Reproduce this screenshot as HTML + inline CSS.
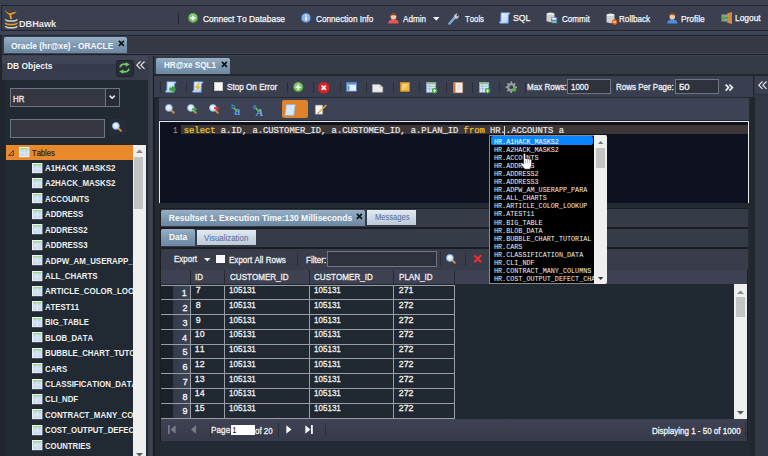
<!DOCTYPE html>
<html><head><meta charset="utf-8">
<style>
*{box-sizing:border-box;margin:0;padding:0}
html,body{width:768px;height:456px;overflow:hidden;background:#3b3f4e;font-family:"Liberation Sans",sans-serif;color:#fff;position:relative}
.a{position:absolute}
.t{position:absolute;white-space:nowrap;font-kerning:none;transform-origin:0 0}
svg{overflow:visible}
</style></head><body>
<div class="a" style="left:0px;top:0px;width:768px;height:31px;background:#3c4152"></div>
<div class="a" style="left:0px;top:31px;width:768px;height:4.5px;background:linear-gradient(#3f4758,#394152)"></div>
<div class="a" style="left:1px;top:5px;width:767px;height:26px;background:#3b3f50;border:1px solid #23252b;border-right:none"></div>
<div class="a" style="left:178px;top:13px;width:1px;height:11px;background:#23262e"></div>
<svg class="a" style="left:3.8px;top:8.6px" width="14" height="20" viewBox="0 0 14 20"><path d="M0.4 0.6 C1.5 1.6 3 3.6 5 4.2 C7 4.5 9 2.8 12.8 2.4 C11.6 3.9 9.6 5.1 7.3 5.7 C7.5 6.9 7.4 8 8.3 9.9 L6.1 9.9 C6.2 8.6 5.1 7.6 5.6 6.3 C3.4 5 1.4 3 0.4 0.6 Z" fill="#f29c12"/>
<path d="M1.5 10.3 C1.5 12.7 13 12.7 13 10.3" fill="none" stroke="#d4d4d4" stroke-width="1.5"/>
<path d="M1.5 13.7 C1.5 16.3 13 16.3 13 13.7" fill="none" stroke="#f29c12" stroke-width="1.6"/>
<path d="M1.5 17 C1.5 19.4 13 19.4 13 17" fill="none" stroke="#d4d4d4" stroke-width="1.5"/></svg>
<div class="t" style="left:18.75px;top:19.60px;font-size:8.8px;line-height:8.8px;font-weight:bold;color:#e4e4e4;font-family:'Liberation Sans',sans-serif;transform:scaleX(1.0417);">DBHawk</div>
<div class="t" style="left:202.60px;top:14.30px;font-size:9.5px;line-height:9.5px;font-weight:normal;color:#f8f8f8;font-family:'Liberation Sans',sans-serif;transform:scaleX(0.8880);-webkit-text-stroke-width:0.25px">Connect To Database</div>
<div class="t" style="left:315.50px;top:14.30px;font-size:9.5px;line-height:9.5px;font-weight:normal;color:#f8f8f8;font-family:'Liberation Sans',sans-serif;transform:scaleX(0.8621);-webkit-text-stroke-width:0.25px">Connection Info</div>
<div class="t" style="left:403.40px;top:14.30px;font-size:9.5px;line-height:9.5px;font-weight:normal;color:#f8f8f8;font-family:'Liberation Sans',sans-serif;transform:scaleX(0.8519);-webkit-text-stroke-width:0.25px">Admin</div>
<div class="t" style="left:464.60px;top:14.30px;font-size:9.5px;line-height:9.5px;font-weight:normal;color:#f8f8f8;font-family:'Liberation Sans',sans-serif;transform:scaleX(0.8174);-webkit-text-stroke-width:0.25px">Tools</div>
<div class="t" style="left:513.08px;top:13.30px;font-size:9.5px;line-height:9.5px;font-weight:normal;color:#f8f8f8;font-family:'Liberation Sans',sans-serif;transform:scaleX(0.9167);-webkit-text-stroke-width:0.25px">SQL</div>
<div class="t" style="left:561.50px;top:14.30px;font-size:9.5px;line-height:9.5px;font-weight:normal;color:#f8f8f8;font-family:'Liberation Sans',sans-serif;transform:scaleX(0.8455);-webkit-text-stroke-width:0.25px">Commit</div>
<div class="t" style="left:619.14px;top:14.30px;font-size:9.5px;line-height:9.5px;font-weight:normal;color:#f8f8f8;font-family:'Liberation Sans',sans-serif;transform:scaleX(0.8556);-webkit-text-stroke-width:0.25px">Rollback</div>
<div class="t" style="left:680.92px;top:14.30px;font-size:9.5px;line-height:9.5px;font-weight:normal;color:#f8f8f8;font-family:'Liberation Sans',sans-serif;transform:scaleX(0.8808);-webkit-text-stroke-width:0.25px">Profile</div>
<div class="t" style="left:735.12px;top:13.30px;font-size:9.5px;line-height:9.5px;font-weight:normal;color:#f8f8f8;font-family:'Liberation Sans',sans-serif;transform:scaleX(0.8821);-webkit-text-stroke-width:0.25px">Logout</div>
<svg class="a" style="left:187.6px;top:13.3px" width="10" height="10" viewBox="0 0 10 10"><circle cx="5" cy="5" r="4.9" fill="#5aa84a"/><circle cx="5" cy="4.6" r="4" fill="#7cc46a"/><path d="M5 2.4V7.6M2.4 5H7.6" stroke="#fff" stroke-width="1.5"/></svg>
<svg class="a" style="left:300.8px;top:13.3px" width="10" height="10" viewBox="0 0 10 10"><circle cx="5" cy="5" r="4.9" fill="#4f7fc0"/><circle cx="5" cy="4.7" r="4.1" fill="#8db4e6"/><rect x="4.3" y="4" width="1.5" height="3.8" fill="#fff"/><rect x="4.3" y="2.1" width="1.5" height="1.3" fill="#fff"/></svg>
<svg class="a" style="left:387.8px;top:12.8px" width="11" height="11" viewBox="0 0 11 11"><path d="M0.3 10.5 C0.3 7.3 2.5 6.3 5.5 6.3 C8.5 6.3 10.7 7.3 10.7 10.5Z" fill="#e8584e"/><circle cx="5.5" cy="3.6" r="2.9" fill="#f3c7a0"/><path d="M2.5 3.2 C2.6 0.8 4 0.3 5.5 0.3 C7 0.3 8.4 0.8 8.5 3.2 C7.5 2.2 6 2 5.5 2.3 C5 2 3.5 2.2 2.5 3.2Z" fill="#8a4a24"/></svg>
<svg class="a" style="left:432.9px;top:16.6px" width="7" height="4" viewBox="0 0 7 4"><path d="M0 0H6.5L3.25 3.8Z" fill="#f5f5f5"/></svg>
<svg class="a" style="left:448.2px;top:12.6px" width="12" height="12" viewBox="0 0 12 12"><path d="M1.5 10.5 L6.8 4.6" stroke="#7da7dc" stroke-width="2.6" stroke-linecap="round"/><path d="M6 3.6 C6 1.5 7.5 0.2 9.8 0.4 L8.4 2.2 L9.2 3.4 L10.8 2.2 C11.2 4.5 9.6 6.2 7.4 5.8Z" fill="#c8c8c8"/></svg>
<svg class="a" style="left:499.3px;top:12.2px" width="11.5" height="12" viewBox="0 0 11.5 12"><defs><linearGradient id="dg" x1="0" y1="0" x2="1" y2="1"><stop offset="0" stop-color="#f4f9ff"/><stop offset="1" stop-color="#a9cdf2"/></linearGradient></defs><path d="M2 0.7H10.2C11.2 0.7 11.2 2.4 10.2 2.4H9.6L9.2 11.3H1.2C0.2 11.3 0.2 9.6 1.2 9.6H1.8Z" fill="url(#dg)" stroke="#5b93d8" stroke-width="0.8"/></svg>
<svg class="a" style="left:545.9px;top:12.4px" width="12" height="12" viewBox="0 0 12 12"><ellipse cx="4.5" cy="2" rx="4" ry="1.6" fill="#e8e8e8"/><path d="M0.5 2 V9 C0.5 10.6 8.5 10.6 8.5 9 V2 C8.5 3.6 0.5 3.6 0.5 2Z" fill="#d0d0d0"/><rect x="5.2" y="5.4" width="6" height="5.8" fill="#4f86c8"/><rect x="6.2" y="5.8" width="4" height="2" fill="#e8f0f8"/><rect x="6.4" y="9" width="3.6" height="2" fill="#8acb6a"/></svg>
<svg class="a" style="left:605.8px;top:12.6px" width="12" height="12" viewBox="0 0 12 12"><ellipse cx="4.5" cy="2" rx="4" ry="1.6" fill="#ececec"/><path d="M0.5 2 V9 C0.5 10.6 8.5 10.6 8.5 9 V2 C8.5 3.6 0.5 3.6 0.5 2Z" fill="#d0d0d0"/><circle cx="8.6" cy="9" r="2.7" fill="#e8641c"/><rect x="7.2" y="8.5" width="2.8" height="1" fill="#fff"/></svg>
<svg class="a" style="left:667px;top:12.8px" width="11" height="11" viewBox="0 0 11 11"><path d="M0.3 10.5 C0.3 7.3 2.5 6.5 5.3 6.5 C8.1 6.5 10.3 7.3 10.3 10.5Z" fill="#4a90e0"/><circle cx="5.3" cy="3.7" r="2.8" fill="#f3c7a0"/><path d="M2.4 3.2 C2.5 0.8 4 0.3 5.3 0.3 C6.6 0.3 8.1 0.8 8.2 3.2 C7.2 2 6 1.9 5.3 2.2 C4.6 1.9 3.4 2 2.4 3.2Z" fill="#a05a28"/></svg>
<svg class="a" style="left:720.5px;top:12.2px" width="12" height="12" viewBox="0 0 12 12"><rect x="0.5" y="2.5" width="6" height="7" fill="#9a9a9a"/><path d="M6.2 1.2 L11 0 V12 L6.2 10.8Z" fill="#d08a3a"/><path d="M0 6 L3 3.5 V5 H6.5 V7 H3 V8.5Z" fill="#3cb43c"/></svg>
<div class="a" style="left:0px;top:35.4px;width:768px;height:20px;background:#343944;border-top:0.9px solid #23252c"></div>
<div class="a" style="left:0px;top:36.3px;width:768px;height:0.8px;background:#3b4151"></div>
<div class="a" style="left:0px;top:52.8px;width:768px;height:0.8px;background:#3d4556"></div>
<div class="a" style="left:0px;top:53.6px;width:768px;height:1.9px;background:#1d2024"></div>
<div class="a" style="left:4px;top:37px;width:123px;height:16px;border-radius:2px 2px 0 0;background:linear-gradient(#97afc6,#809bb4 45%,#6b87a1)"></div>
<div class="t" style="left:11.00px;top:40.60px;font-size:9.5px;line-height:9.5px;font-weight:bold;color:#fafafa;font-family:'Liberation Sans',sans-serif;transform:scaleX(0.8784);">Oracle (hr@xe) - ORACLE</div>
<svg class="a" style="left:117.8px;top:39.8px" width="6.8" height="6.8" viewBox="0 0 6.8 6.8"><path d="M0.9 0.9L5.9 5.9M5.9 0.9L0.9 5.9" stroke="#111" stroke-width="1.6"/></svg>
<div class="a" style="left:0px;top:35.5px;width:1.8px;height:420.5px;background:#22252c"></div>
<div class="a" style="left:1.8px;top:55.5px;width:146.7px;height:24.5px;background:linear-gradient(#42475a,#3e4356 32%,#363b4b 34%,#383d4e)"></div>
<div class="t" style="left:6.50px;top:61.00px;font-size:9.5px;line-height:9.5px;font-weight:bold;color:#f5f5f5;font-family:'Liberation Sans',sans-serif;transform:scaleX(0.8873);">DB Objects</div>
<div class="a" style="left:1.8px;top:80px;width:146.7px;height:376px;background:#212a33"></div>
<div class="a" style="left:1.8px;top:80px;width:3px;height:376px;background:#1e252c"></div>
<div class="a" style="left:116px;top:59.5px;width:17.5px;height:17.25px;background:#282d39;border:0.8px solid #1f232b;border-radius:2.5px"></div>
<svg class="a" style="left:117.2px;top:60.8px" width="15" height="14" viewBox="0 0 15 14"><path d="M2.2 6.2 C2.8 3 6 1.6 9 2.6 L8.6 1 L12.8 3.4 L8.4 5.8 L8.8 4.4 C6.6 3.6 4.6 4.2 3.8 6.6Z" fill="#74c864"/><path d="M12.8 7.8 C12.2 11 9 12.4 6 11.4 L6.4 13 L2.2 10.6 L6.6 8.2 L6.2 9.6 C8.4 10.4 10.4 9.8 11.2 7.4Z" fill="#74c864"/></svg>
<svg class="a" style="left:136.2px;top:61px" width="9" height="8.5" viewBox="0 0 9 8.5"><path d="M4.5 0.5L0.8 4.2L4.5 7.9M8.5 0.5L4.8 4.2L8.5 7.9" fill="none" stroke="#e8e8e8" stroke-width="1.2"/></svg>
<div class="a" style="left:10px;top:88px;width:110px;height:19px;background:#34373f;border:1px solid #6f7482"></div>
<div class="a" style="left:104.5px;top:89px;width:1px;height:17px;background:#6f7482"></div>
<div class="a" style="left:105.5px;top:89px;width:13.5px;height:17px;background:#262b36"></div>
<svg class="a" style="left:109px;top:95.2px" width="6.4" height="4" viewBox="0 0 6.4 4"><path d="M0.6 0.6L3.2 3.2L5.8 0.6" fill="none" stroke="#f0f0f0" stroke-width="1.5"/></svg>
<div class="t" style="left:13.30px;top:94.60px;font-size:8.8px;line-height:8.8px;font-weight:normal;color:#f0f0f0;font-family:'Liberation Sans',sans-serif;transform:scaleX(0.8917);-webkit-text-stroke-width:0.3px;">HR</div>
<div class="a" style="left:10px;top:118.5px;width:95px;height:19px;background:#34373f;border:1px solid #6f7482"></div>
<div class="a" style="left:109.75px;top:119px;width:16px;height:15.75px;background:#272c38;border-radius:2px"></div>
<svg class="a" style="left:111.7px;top:121.8px" width="9.5" height="9.5" viewBox="0 0 9.5 9.5"><path d="M6 6L8.8 8.8" stroke="#d4893a" stroke-width="2" stroke-linecap="round"/><circle cx="3.9" cy="3.9" r="3.4" fill="#d8eafa" stroke="#88b2e0" stroke-width="0.9"/><circle cx="3.3" cy="3.2" r="1.4" fill="#f4faff"/></svg>
<div class="a" style="left:6px;top:145px;width:127px;height:15px;background:#e8892c"></div>
<svg class="a" style="left:8px;top:149.6px" width="6" height="6" viewBox="0 0 6 6"><path d="M5.4 0.6V5.4H0.6Z" fill="none" stroke="#3a2a1a" stroke-width="0.8"/></svg>
<svg class="a" style="left:18.6px;top:147.3px" width="10.4" height="10" viewBox="0 0 10.4 10"><rect x="0.5" y="0.5" width="9.4" height="9.2" fill="#c9dcf2" stroke="#eef4fb" stroke-width="1"/><rect x="1" y="1" width="8.4" height="1.5" fill="#a6d884"/><path d="M1 5.8H9.4M5.2 2.5V9.2" stroke="#e4eefa" stroke-width="0.8"/></svg>
<div class="t" style="left:32.20px;top:148.50px;font-size:9px;line-height:9px;font-weight:normal;color:#2a2016;font-family:'Liberation Sans',sans-serif;transform:scaleX(0.8444);-webkit-text-stroke-width:0.2px">Tables</div>
<div class="a" style="left:133px;top:145px;width:13px;height:311px;background:#efefef"></div>
<svg class="a" style="left:135.8px;top:149px" width="7" height="4" viewBox="0 0 7 4"><path d="M0 4H7L3.5 0.5Z" fill="#8a8a8a"/></svg>
<div class="a" style="left:134.4px;top:157.4px;width:8.6px;height:51.4px;background:#c3c3c3"></div>
<svg class="a" style="left:135.8px;top:453px" width="7" height="4" viewBox="0 0 7 4"><path d="M0 0H7L3.5 3.5Z" fill="#555"/></svg>
<div class="a" style="left:0;top:0;width:133px;height:456px;overflow:hidden">
<svg class="a" style="left:31.7px;top:162.6px" width="10.4" height="10" viewBox="0 0 10.4 10"><rect x="0.5" y="0.5" width="9.4" height="9.2" fill="#c9dcf2" stroke="#eef4fb" stroke-width="1"/><rect x="1" y="1" width="8.4" height="1.5" fill="#a6d884"/><path d="M1 5.8H9.4M5.2 2.5V9.2" stroke="#e4eefa" stroke-width="0.8"/></svg>
<div class="t" style="left:44.70px;top:164.00px;font-size:8.6px;line-height:8.6px;font-weight:bold;color:#f0f0f0;font-family:'Liberation Sans',sans-serif;transform:scaleX(0.9211);">A1HACK_MASKS2</div>
<svg class="a" style="left:31.7px;top:178.03px" width="10.4" height="10" viewBox="0 0 10.4 10"><rect x="0.5" y="0.5" width="9.4" height="9.2" fill="#c9dcf2" stroke="#eef4fb" stroke-width="1"/><rect x="1" y="1" width="8.4" height="1.5" fill="#a6d884"/><path d="M1 5.8H9.4M5.2 2.5V9.2" stroke="#e4eefa" stroke-width="0.8"/></svg>
<div class="t" style="left:44.70px;top:179.43px;font-size:8.6px;line-height:8.6px;font-weight:bold;color:#f0f0f0;font-family:'Liberation Sans',sans-serif;transform:scaleX(0.9211);">A2HACK_MASKS2</div>
<svg class="a" style="left:31.7px;top:193.45999999999998px" width="10.4" height="10" viewBox="0 0 10.4 10"><rect x="0.5" y="0.5" width="9.4" height="9.2" fill="#c9dcf2" stroke="#eef4fb" stroke-width="1"/><rect x="1" y="1" width="8.4" height="1.5" fill="#a6d884"/><path d="M1 5.8H9.4M5.2 2.5V9.2" stroke="#e4eefa" stroke-width="0.8"/></svg>
<div class="t" style="left:44.70px;top:194.86px;font-size:8.6px;line-height:8.6px;font-weight:bold;color:#f0f0f0;font-family:'Liberation Sans',sans-serif;transform:scaleX(0.9069);">ACCOUNTS</div>
<svg class="a" style="left:31.7px;top:208.89px" width="10.4" height="10" viewBox="0 0 10.4 10"><rect x="0.5" y="0.5" width="9.4" height="9.2" fill="#c9dcf2" stroke="#eef4fb" stroke-width="1"/><rect x="1" y="1" width="8.4" height="1.5" fill="#a6d884"/><path d="M1 5.8H9.4M5.2 2.5V9.2" stroke="#e4eefa" stroke-width="0.8"/></svg>
<div class="t" style="left:44.70px;top:210.29px;font-size:8.6px;line-height:8.6px;font-weight:bold;color:#f0f0f0;font-family:'Liberation Sans',sans-serif;transform:scaleX(0.9113);">ADDRESS</div>
<svg class="a" style="left:31.7px;top:224.32px" width="10.4" height="10" viewBox="0 0 10.4 10"><rect x="0.5" y="0.5" width="9.4" height="9.2" fill="#c9dcf2" stroke="#eef4fb" stroke-width="1"/><rect x="1" y="1" width="8.4" height="1.5" fill="#a6d884"/><path d="M1 5.8H9.4M5.2 2.5V9.2" stroke="#e4eefa" stroke-width="0.8"/></svg>
<div class="t" style="left:44.70px;top:225.72px;font-size:8.6px;line-height:8.6px;font-weight:bold;color:#f0f0f0;font-family:'Liberation Sans',sans-serif;transform:scaleX(0.9080);">ADDRESS2</div>
<svg class="a" style="left:31.7px;top:239.75px" width="10.4" height="10" viewBox="0 0 10.4 10"><rect x="0.5" y="0.5" width="9.4" height="9.2" fill="#c9dcf2" stroke="#eef4fb" stroke-width="1"/><rect x="1" y="1" width="8.4" height="1.5" fill="#a6d884"/><path d="M1 5.8H9.4M5.2 2.5V9.2" stroke="#e4eefa" stroke-width="0.8"/></svg>
<div class="t" style="left:44.70px;top:241.15px;font-size:8.6px;line-height:8.6px;font-weight:bold;color:#f0f0f0;font-family:'Liberation Sans',sans-serif;transform:scaleX(0.9087);">ADDRESS3</div>
<svg class="a" style="left:31.7px;top:255.18px" width="10.4" height="10" viewBox="0 0 10.4 10"><rect x="0.5" y="0.5" width="9.4" height="9.2" fill="#c9dcf2" stroke="#eef4fb" stroke-width="1"/><rect x="1" y="1" width="8.4" height="1.5" fill="#a6d884"/><path d="M1 5.8H9.4M5.2 2.5V9.2" stroke="#e4eefa" stroke-width="0.8"/></svg>
<div class="t" style="left:44.70px;top:256.58px;font-size:8.6px;line-height:8.6px;font-weight:bold;color:#f0f0f0;font-family:'Liberation Sans',sans-serif;transform:scaleX(0.9184);">ADPW_AM_USERAPP_PARA</div>
<svg class="a" style="left:31.7px;top:270.61px" width="10.4" height="10" viewBox="0 0 10.4 10"><rect x="0.5" y="0.5" width="9.4" height="9.2" fill="#c9dcf2" stroke="#eef4fb" stroke-width="1"/><rect x="1" y="1" width="8.4" height="1.5" fill="#a6d884"/><path d="M1 5.8H9.4M5.2 2.5V9.2" stroke="#e4eefa" stroke-width="0.8"/></svg>
<div class="t" style="left:44.70px;top:272.01px;font-size:8.6px;line-height:8.6px;font-weight:bold;color:#f0f0f0;font-family:'Liberation Sans',sans-serif;transform:scaleX(0.9187);">ALL_CHARTS</div>
<svg class="a" style="left:31.7px;top:286.03999999999996px" width="10.4" height="10" viewBox="0 0 10.4 10"><rect x="0.5" y="0.5" width="9.4" height="9.2" fill="#c9dcf2" stroke="#eef4fb" stroke-width="1"/><rect x="1" y="1" width="8.4" height="1.5" fill="#a6d884"/><path d="M1 5.8H9.4M5.2 2.5V9.2" stroke="#e4eefa" stroke-width="0.8"/></svg>
<div class="t" style="left:44.70px;top:287.44px;font-size:8.6px;line-height:8.6px;font-weight:bold;color:#f0f0f0;font-family:'Liberation Sans',sans-serif;transform:scaleX(0.9236);">ARTICLE_COLOR_LOOKUP</div>
<svg class="a" style="left:31.7px;top:301.47px" width="10.4" height="10" viewBox="0 0 10.4 10"><rect x="0.5" y="0.5" width="9.4" height="9.2" fill="#c9dcf2" stroke="#eef4fb" stroke-width="1"/><rect x="1" y="1" width="8.4" height="1.5" fill="#a6d884"/><path d="M1 5.8H9.4M5.2 2.5V9.2" stroke="#e4eefa" stroke-width="0.8"/></svg>
<div class="t" style="left:44.70px;top:302.87px;font-size:8.6px;line-height:8.6px;font-weight:bold;color:#f0f0f0;font-family:'Liberation Sans',sans-serif;transform:scaleX(0.9053);">ATEST11</div>
<svg class="a" style="left:31.7px;top:316.9px" width="10.4" height="10" viewBox="0 0 10.4 10"><rect x="0.5" y="0.5" width="9.4" height="9.2" fill="#c9dcf2" stroke="#eef4fb" stroke-width="1"/><rect x="1" y="1" width="8.4" height="1.5" fill="#a6d884"/><path d="M1 5.8H9.4M5.2 2.5V9.2" stroke="#e4eefa" stroke-width="0.8"/></svg>
<div class="t" style="left:44.70px;top:318.30px;font-size:8.6px;line-height:8.6px;font-weight:bold;color:#f0f0f0;font-family:'Liberation Sans',sans-serif;transform:scaleX(0.9001);">BIG_TABLE</div>
<svg class="a" style="left:31.7px;top:332.33px" width="10.4" height="10" viewBox="0 0 10.4 10"><rect x="0.5" y="0.5" width="9.4" height="9.2" fill="#c9dcf2" stroke="#eef4fb" stroke-width="1"/><rect x="1" y="1" width="8.4" height="1.5" fill="#a6d884"/><path d="M1 5.8H9.4M5.2 2.5V9.2" stroke="#e4eefa" stroke-width="0.8"/></svg>
<div class="t" style="left:44.70px;top:333.73px;font-size:8.6px;line-height:8.6px;font-weight:bold;color:#f0f0f0;font-family:'Liberation Sans',sans-serif;transform:scaleX(0.9089);">BLOB_DATA</div>
<svg class="a" style="left:31.7px;top:347.76px" width="10.4" height="10" viewBox="0 0 10.4 10"><rect x="0.5" y="0.5" width="9.4" height="9.2" fill="#c9dcf2" stroke="#eef4fb" stroke-width="1"/><rect x="1" y="1" width="8.4" height="1.5" fill="#a6d884"/><path d="M1 5.8H9.4M5.2 2.5V9.2" stroke="#e4eefa" stroke-width="0.8"/></svg>
<div class="t" style="left:44.70px;top:349.16px;font-size:8.6px;line-height:8.6px;font-weight:bold;color:#f0f0f0;font-family:'Liberation Sans',sans-serif;transform:scaleX(0.9155);">BUBBLE_CHART_TUTORIAL</div>
<svg class="a" style="left:31.7px;top:363.19px" width="10.4" height="10" viewBox="0 0 10.4 10"><rect x="0.5" y="0.5" width="9.4" height="9.2" fill="#c9dcf2" stroke="#eef4fb" stroke-width="1"/><rect x="1" y="1" width="8.4" height="1.5" fill="#a6d884"/><path d="M1 5.8H9.4M5.2 2.5V9.2" stroke="#e4eefa" stroke-width="0.8"/></svg>
<div class="t" style="left:44.70px;top:364.59px;font-size:8.6px;line-height:8.6px;font-weight:bold;color:#f0f0f0;font-family:'Liberation Sans',sans-serif;transform:scaleX(0.9099);">CARS</div>
<svg class="a" style="left:31.7px;top:378.62px" width="10.4" height="10" viewBox="0 0 10.4 10"><rect x="0.5" y="0.5" width="9.4" height="9.2" fill="#c9dcf2" stroke="#eef4fb" stroke-width="1"/><rect x="1" y="1" width="8.4" height="1.5" fill="#a6d884"/><path d="M1 5.8H9.4M5.2 2.5V9.2" stroke="#e4eefa" stroke-width="0.8"/></svg>
<div class="t" style="left:44.70px;top:380.02px;font-size:8.6px;line-height:8.6px;font-weight:bold;color:#f0f0f0;font-family:'Liberation Sans',sans-serif;transform:scaleX(0.9152);">CLASSIFICATION_DATA</div>
<svg class="a" style="left:31.7px;top:394.04999999999995px" width="10.4" height="10" viewBox="0 0 10.4 10"><rect x="0.5" y="0.5" width="9.4" height="9.2" fill="#c9dcf2" stroke="#eef4fb" stroke-width="1"/><rect x="1" y="1" width="8.4" height="1.5" fill="#a6d884"/><path d="M1 5.8H9.4M5.2 2.5V9.2" stroke="#e4eefa" stroke-width="0.8"/></svg>
<div class="t" style="left:44.70px;top:395.45px;font-size:8.6px;line-height:8.6px;font-weight:bold;color:#f0f0f0;font-family:'Liberation Sans',sans-serif;transform:scaleX(0.9131);">CLI_NDF</div>
<svg class="a" style="left:31.7px;top:409.48px" width="10.4" height="10" viewBox="0 0 10.4 10"><rect x="0.5" y="0.5" width="9.4" height="9.2" fill="#c9dcf2" stroke="#eef4fb" stroke-width="1"/><rect x="1" y="1" width="8.4" height="1.5" fill="#a6d884"/><path d="M1 5.8H9.4M5.2 2.5V9.2" stroke="#e4eefa" stroke-width="0.8"/></svg>
<div class="t" style="left:44.70px;top:410.88px;font-size:8.6px;line-height:8.6px;font-weight:bold;color:#f0f0f0;font-family:'Liberation Sans',sans-serif;transform:scaleX(0.9217);">CONTRACT_MANY_COLUMNS</div>
<svg class="a" style="left:31.7px;top:424.90999999999997px" width="10.4" height="10" viewBox="0 0 10.4 10"><rect x="0.5" y="0.5" width="9.4" height="9.2" fill="#c9dcf2" stroke="#eef4fb" stroke-width="1"/><rect x="1" y="1" width="8.4" height="1.5" fill="#a6d884"/><path d="M1 5.8H9.4M5.2 2.5V9.2" stroke="#e4eefa" stroke-width="0.8"/></svg>
<div class="t" style="left:44.70px;top:426.31px;font-size:8.6px;line-height:8.6px;font-weight:bold;color:#f0f0f0;font-family:'Liberation Sans',sans-serif;transform:scaleX(0.9113);">COST_OUTPUT_DEFECT</div>
<svg class="a" style="left:31.7px;top:440.34000000000003px" width="10.4" height="10" viewBox="0 0 10.4 10"><rect x="0.5" y="0.5" width="9.4" height="9.2" fill="#c9dcf2" stroke="#eef4fb" stroke-width="1"/><rect x="1" y="1" width="8.4" height="1.5" fill="#a6d884"/><path d="M1 5.8H9.4M5.2 2.5V9.2" stroke="#e4eefa" stroke-width="0.8"/></svg>
<div class="t" style="left:44.70px;top:441.74px;font-size:8.6px;line-height:8.6px;font-weight:bold;color:#f0f0f0;font-family:'Liberation Sans',sans-serif;transform:scaleX(0.9034);">COUNTRIES</div>
</div>
<div class="a" style="left:148.5px;top:55.5px;width:619.5px;height:401px;background:#30353f"></div>
<div class="a" style="left:148.5px;top:55.5px;width:0.9px;height:401px;background:#262a33"></div>
<div class="a" style="left:149.2px;top:55.5px;width:3.9px;height:401px;background:linear-gradient(90deg,#363b49,#404656 50%,#363b49)"></div>
<div class="a" style="left:153.1px;top:55.5px;width:1.6px;height:401px;background:#1c1e23"></div>
<div class="a" style="left:154.3px;top:55.5px;width:613.7px;height:18.8px;background:#353a47"></div>
<div class="a" style="left:156.2px;top:58.1px;width:74.1px;height:15.6px;border-radius:2px 2px 0 0;background:linear-gradient(#97afc6,#809bb4 45%,#6b87a1)"></div>
<div class="t" style="left:163.50px;top:61.30px;font-size:9px;line-height:9px;font-weight:bold;color:#fafafa;font-family:'Liberation Sans',sans-serif;transform:scaleX(0.9000);">HR@xe SQL1</div>
<svg class="a" style="left:221px;top:60.6px" width="6.4" height="6.4" viewBox="0 0 6.4 6.4"><path d="M0.9 0.9L5.9 5.9M5.9 0.9L0.9 5.9" stroke="#111" stroke-width="1.6"/></svg>
<div class="a" style="left:154.3px;top:74.3px;width:613.7px;height:1.8px;background:#23272e"></div>
<div class="a" style="left:154.3px;top:76.1px;width:599px;height:20.6px;background:#3a3f50"></div>
<div class="a" style="left:154.3px;top:96.5px;width:600px;height:1.5px;background:#23262e"></div>
<div class="a" style="left:160px;top:81.6px;width:1px;height:11.2px;background:#2a2e38"></div>
<div class="a" style="left:186.2px;top:81.6px;width:1px;height:11.2px;background:#2a2e38"></div>
<div class="a" style="left:212.5px;top:81.6px;width:1px;height:11.2px;background:#2a2e38"></div>
<div class="a" style="left:287.3px;top:81.6px;width:1px;height:11.2px;background:#2a2e38"></div>
<div class="a" style="left:313.1px;top:81.6px;width:1px;height:11.2px;background:#2a2e38"></div>
<div class="a" style="left:340.2px;top:81.6px;width:1px;height:11.2px;background:#2a2e38"></div>
<div class="a" style="left:366.25px;top:81.6px;width:1px;height:11.2px;background:#2a2e38"></div>
<div class="a" style="left:393.3px;top:81.6px;width:1px;height:11.2px;background:#2a2e38"></div>
<div class="a" style="left:419.4px;top:81.6px;width:1px;height:11.2px;background:#2a2e38"></div>
<div class="a" style="left:445.7px;top:81.6px;width:1px;height:11.2px;background:#2a2e38"></div>
<div class="a" style="left:471.8px;top:81.6px;width:1px;height:11.2px;background:#2a2e38"></div>
<div class="a" style="left:498.6px;top:81.6px;width:1px;height:11.2px;background:#2a2e38"></div>
<div class="a" style="left:524.8px;top:81.6px;width:1px;height:11.2px;background:#2a2e38"></div>
<div class="a" style="left:613.6px;top:81.6px;width:1px;height:11.2px;background:#2a2e38"></div>
<svg class="a" style="left:165.4px;top:80.8px" width="11.5" height="12" viewBox="0 0 11.5 12"><defs><linearGradient id="dg" x1="0" y1="0" x2="1" y2="1"><stop offset="0" stop-color="#f4f9ff"/><stop offset="1" stop-color="#a9cdf2"/></linearGradient></defs><path d="M2 0.7H10.2C11.2 0.7 11.2 2.4 10.2 2.4H9.6L9.2 11.3H1.2C0.2 11.3 0.2 9.6 1.2 9.6H1.8Z" fill="url(#dg)" stroke="#5b93d8" stroke-width="0.8"/><path d="M4.4 6.6H7.2V4.6L11.4 8.2L7.2 11.8V9.8H4.4Z" fill="#3ca23a"/></svg>
<svg class="a" style="left:191.7px;top:80.8px" width="11.5" height="12" viewBox="0 0 11.5 12"><defs><linearGradient id="dg" x1="0" y1="0" x2="1" y2="1"><stop offset="0" stop-color="#f4f9ff"/><stop offset="1" stop-color="#a9cdf2"/></linearGradient></defs><path d="M2 0.7H10.2C11.2 0.7 11.2 2.4 10.2 2.4H9.6L9.2 11.3H1.2C0.2 11.3 0.2 9.6 1.2 9.6H1.8Z" fill="url(#dg)" stroke="#5b93d8" stroke-width="0.8"/><path d="M7 1.8L2.4 6.8H5.4L3.4 10.8L8.8 5.2H5.8L8 1.8Z" fill="#f2b818"/></svg>
<div class="a" style="left:214.4px;top:82px;width:8.9px;height:8.5px;background:#f7f7f7;border:0.6px solid #c8c8c8"></div>
<div class="t" style="left:227.20px;top:82.80px;font-size:8.8px;line-height:8.8px;font-weight:normal;color:#f0f0f0;font-family:'Liberation Sans',sans-serif;transform:scaleX(0.9259);-webkit-text-stroke-width:0.3px;">Stop On Error</div>
<svg class="a" style="left:292.9px;top:81.8px" width="10.4" height="10.4" viewBox="0 0 10.4 10.4"><circle cx="5.2" cy="5.2" r="5.1" fill="#4c9a3c"/><circle cx="5.2" cy="4.8" r="4.2" fill="#82c86e"/><path d="M5.2 2.6V7.8M2.6 5.2H7.8" stroke="#fff" stroke-width="1.5"/></svg>
<svg class="a" style="left:318.3px;top:81.6px" width="11.5" height="11.5" viewBox="0 0 11.5 11.5"><path d="M3.3 0.3H8.2L11.2 3.3V8.2L8.2 11.2H3.3L0.3 8.2V3.3Z" fill="#e02020"/><path d="M3.6 3.6L7.9 7.9M7.9 3.6L3.6 7.9" stroke="#fff" stroke-width="1.7"/></svg>
<svg class="a" style="left:345.5px;top:81.8px" width="11" height="9.6" viewBox="0 0 11 9.6"><rect x="0.4" y="0.4" width="10.2" height="8.8" fill="#e8f0fa" stroke="#4a7cc0" stroke-width="0.8"/><rect x="0.8" y="0.8" width="9.4" height="1.8" fill="#5a8ad0"/><rect x="1.4" y="3.4" width="2" height="5" fill="#5a8ad0"/></svg>
<svg class="a" style="left:371.8px;top:83.8px" width="11.2" height="8.6" viewBox="0 0 11.2 8.6"><path d="M0.4 0.4H7.6L10.8 3.2V8.2H0.4Z" fill="#ececec" stroke="#a8a8a8" stroke-width="0.6"/><path d="M7.6 0.4V3.2H10.8" fill="#c8c8c8"/></svg>
<svg class="a" style="left:399.6px;top:82.2px" width="10" height="10" viewBox="0 0 10 10"><rect x="0.3" y="0.3" width="9.2" height="9.2" fill="#e8a030" stroke="#d08a20" stroke-width="0.6"/><rect x="2" y="1.6" width="6.6" height="6.6" fill="#f8d070"/><path d="M3 8.2L8.6 2.6V8.2Z" fill="#f0b848"/></svg>
<svg class="a" style="left:425.6px;top:81.5px" width="11.2" height="11.4" viewBox="0 0 11.2 11.4"><rect x="0.4" y="0.4" width="9.4" height="10" fill="#dce8f6" stroke="#7aa0d0" stroke-width="0.7"/><rect x="0.8" y="0.8" width="8.6" height="1.6" fill="#8ccc6c"/><path d="M0.8 4.4H9.4M0.8 6.8H9.4M3.6 2.6V10" stroke="#8aaad0" stroke-width="0.6"/><circle cx="8.6" cy="8.8" r="2.7" fill="#3aa43a"/><path d="M8.6 7.2V10.4M7 8.8H10.2" stroke="#fff" stroke-width="1"/></svg>
<svg class="a" style="left:452.5px;top:81.6px" width="10.5" height="11.2" viewBox="0 0 10.5 11.2"><rect x="0.8" y="0.3" width="9" height="10.6" fill="#f4f4f4" stroke="#c87838" stroke-width="0.6"/><rect x="0.3" y="0.3" width="2.2" height="10.6" fill="#d8783a"/><path d="M4 3H8M4 5H8M4 7H8" stroke="#c0c0c0" stroke-width="0.6"/></svg>
<svg class="a" style="left:479px;top:81.5px" width="11.2" height="11.4" viewBox="0 0 11.2 11.4"><rect x="0.4" y="0.4" width="9.4" height="10" fill="#dce8f6" stroke="#7aa0d0" stroke-width="0.7"/><rect x="0.8" y="0.8" width="8.6" height="1.6" fill="#8ccc6c"/><path d="M0.8 4.4H9.4M0.8 6.8H9.4M3.6 2.6V10" stroke="#8aaad0" stroke-width="0.6"/><circle cx="8.6" cy="8.8" r="2.7" fill="#3aa43a"/><path d="M8.6 7.2V10.4M7 8.8H10.2" stroke="#fff" stroke-width="1"/></svg>
<svg class="a" style="left:504.6px;top:81px" width="12.4" height="12.4" viewBox="0 0 12.4 12.4"><path d="M5.6 0.4L7 0.6L7.3 2.2L8.6 2.8L9.8 1.8L10.8 2.8L9.8 4.1L10.4 5.4L12 5.6V7L10.4 7.3L9.8 8.6L10.8 9.8L9.8 10.8L8.6 9.8L7.3 10.4L7 12H5.6L5.3 10.4L4 9.8L2.8 10.8L1.8 9.8L2.8 8.6L2.2 7.3L0.6 7V5.6L2.2 5.3L2.8 4L1.8 2.8L2.8 1.8L4 2.8L5.3 2.2Z" fill="#9aa0a0"/><circle cx="6.3" cy="6.3" r="2" fill="#3a3f50"/><path d="M6.5 7.5H9V6L12 8.4L9 10.8V9.4H6.5Z" fill="#50b040"/></svg>
<div class="t" style="left:526.80px;top:83.10px;font-size:8.8px;line-height:8.8px;font-weight:normal;color:#f0f0f0;font-family:'Liberation Sans',sans-serif;transform:scaleX(0.9163);-webkit-text-stroke-width:0.3px;">Max Rows:</div>
<div class="a" style="left:567.1px;top:79.3px;width:43.8px;height:14.9px;background:#2e323c;border:1.3px solid #6f7482"></div>
<div class="t" style="left:570.51px;top:83.10px;font-size:8.8px;line-height:8.8px;font-weight:normal;color:#f5f5f5;font-family:'Liberation Sans',sans-serif;transform:scaleX(0.8947);-webkit-text-stroke-width:0.3px;">1000</div>
<div class="t" style="left:615.80px;top:83.10px;font-size:8.8px;line-height:8.8px;font-weight:normal;color:#f0f0f0;font-family:'Liberation Sans',sans-serif;transform:scaleX(0.9079);-webkit-text-stroke-width:0.3px;">Rows Per Page:</div>
<div class="a" style="left:675px;top:79.2px;width:43.5px;height:15.3px;background:#2e323c;border:1.3px solid #6f7482"></div>
<div class="t" style="left:678.60px;top:83.10px;font-size:8.8px;line-height:8.8px;font-weight:normal;color:#f5f5f5;font-family:'Liberation Sans',sans-serif;transform:scaleX(1.0900);-webkit-text-stroke-width:0.3px;">50</div>
<svg class="a" style="left:725.2px;top:84.2px" width="8" height="7.2" viewBox="0 0 8 7.2"><path d="M0.6 0.6L3.6 3.6L0.6 6.6M4.4 0.6L7.4 3.6L4.4 6.6" fill="none" stroke="#f5f5f5" stroke-width="1.6"/></svg>
<div class="a" style="left:154.7px;top:98px;width:595px;height:358px;background:#232a33"></div>
<div class="a" style="left:158.8px;top:98px;width:590.2px;height:22px;background:#3d4254"></div>
<svg class="a" style="left:164.6px;top:103.6px" width="10" height="10" viewBox="0 0 10 10"><path d="M6 6L8.8 8.8" stroke="#d4893a" stroke-width="2" stroke-linecap="round"/><circle cx="3.9" cy="3.9" r="3.4" fill="#d8eafa" stroke="#88b2e0" stroke-width="0.9"/><circle cx="3.3" cy="3.2" r="1.4" fill="#f4faff"/></svg>
<svg class="a" style="left:186.8px;top:103.6px" width="10.5" height="10" viewBox="0 0 10.5 10"><path d="M6 6L8.8 8.8" stroke="#d4893a" stroke-width="2" stroke-linecap="round"/><circle cx="3.9" cy="3.9" r="3.4" fill="#d8eafa" stroke="#88b2e0" stroke-width="0.9"/><circle cx="3.3" cy="3.2" r="1.4" fill="#f4faff"/><path d="M5.2 4.2H7.4V2.6L10.2 5.2L7.4 7.8V6.2H5.2Z" fill="#3aa83a"/></svg>
<svg class="a" style="left:208.7px;top:103.6px" width="10.5" height="10" viewBox="0 0 10.5 10"><path d="M6 6L8.8 8.8" stroke="#d4893a" stroke-width="2" stroke-linecap="round"/><circle cx="3.9" cy="3.9" r="3.4" fill="#d8eafa" stroke="#88b2e0" stroke-width="0.9"/><circle cx="3.3" cy="3.2" r="1.4" fill="#f4faff"/><rect x="5" y="3.2" width="5.2" height="2" fill="#e83030"/></svg>
<svg class="a" style="left:230.6px;top:102.6px" width="12" height="13" viewBox="0 0 12 13"><text x="0.2" y="6" font-family="Liberation Sans" font-weight="bold" font-size="7.2" fill="#3a86e0">b</text><text x="3.6" y="12.2" font-family="Liberation Sans" font-style="italic" font-weight="bold" font-size="10.5" fill="#5a9cf0">a</text><path d="M2.8 5L5.6 7.8" stroke="#6ac858" stroke-width="1.5"/><path d="M6.8 9L3.8 8.4L6.2 6Z" fill="#50b040"/></svg>
<svg class="a" style="left:252.5px;top:102.6px" width="13" height="13" viewBox="0 0 13 13"><text x="0" y="6.2" font-family="Liberation Sans" font-weight="bold" font-size="7.2" fill="#3a86e0">a</text><text x="3" y="12.8" font-family="Liberation Serif" font-style="italic" font-weight="bold" font-size="11" fill="#78aef0">A</text><path d="M2.8 5.2L5.6 8" stroke="#6ac858" stroke-width="1.5"/><path d="M6.8 9.2L3.8 8.6L6.2 6.2Z" fill="#50b040"/></svg>
<div class="a" style="left:281.7px;top:99.9px;width:26.6px;height:18.3px;background:#e0822a;border-radius:2.5px"></div>
<svg class="a" style="left:284px;top:103.6px" width="12" height="12" viewBox="0 0 12 12"><path d="M2.2 0.6H11C11.8 0.6 11.8 1.9 11 2.1L9.9 11.4H0.9C0.1 11.4 0.3 10.1 1.1 10.1H1.3Z" fill="#d4e6f8" stroke="#88acd8" stroke-width="0.6"/></svg>
<svg class="a" style="left:314.5px;top:103.8px" width="12" height="10.4" viewBox="0 0 12 10.4"><path d="M0.4 1.2H7.6V10.2H0.4Z" fill="#f4f4f4" stroke="#b0b0b0" stroke-width="0.5"/><path d="M3 8.2L10.8 0.6L11.8 1.6L4 9.2L2.4 9.6Z" fill="#f0b030"/><path d="M2.4 9.6L3 8.2L4 9.2Z" fill="#3a6ab0"/></svg>
<div class="a" style="left:159px;top:120.8px;width:590px;height:83.2px;background:#0d1120;border:1px solid #e8e8e8;border-bottom:none"></div>
<div class="a" style="left:181px;top:125.4px;width:567px;height:9px;background:#3d3636"></div>
<div class="t" style="left:173.35px;top:125.60px;font-size:9.2px;line-height:9.2px;font-weight:normal;color:#9a9eaa;font-family:'Liberation Mono',monospace;transform:scaleX(0.8500);">1</div>
<div class="t" style="left:183.8px;top:126.6px;font:8.8px/9px 'Liberation Mono',monospace;font-kerning:none;-webkit-text-stroke-width:0.2px"><span style="color:#f0c62a">select</span><span style="color:#e8e8e8"> a.ID, a.CUSTOMER_ID, a.CUSTOMER_ID, a.PLAN_ID </span><span style="color:#f0c62a">from</span><span style="color:#e8e8e8"> HR..ACCOUNTS a</span></div>
<div class="a" style="left:504.4px;top:125.6px;width:0.9px;height:9.2px;background:#d8d8d8"></div>
<div class="a" style="left:749.7px;top:96.5px;width:5px;height:360px;background:#22262d"></div>
<div class="a" style="left:753.3px;top:76.1px;width:1.2px;height:21px;background:#22262d"></div>
<div class="a" style="left:754.5px;top:76.1px;width:13.5px;height:380px;background:#333845"></div>
<div class="a" style="left:754.5px;top:76.1px;width:13.5px;height:17.9px;background:#3a3f50"></div>
<div class="a" style="left:754.5px;top:94px;width:13.5px;height:1px;background:#2a2e38"></div>
<svg class="a" style="left:757.5px;top:81px" width="9" height="8.5" viewBox="0 0 9 8.5"><path d="M4.5 0.5L0.8 4.2L4.5 7.9M8.5 0.5L4.8 4.2L8.5 7.9" fill="none" stroke="#e8e8e8" stroke-width="1.2"/></svg>
<div class="a" style="left:154.7px;top:203.3px;width:594.5px;height:252.7px;background:#232a33"></div>
<div class="a" style="left:159.8px;top:208.2px;width:588.4px;height:233.4px;background:#1b1d22"></div>
<div class="a" style="left:161px;top:208.6px;width:586.7px;height:18px;background:#363b48"></div>
<div class="a" style="left:161px;top:228.6px;width:586.7px;height:18.2px;background:#363b48"></div>
<div class="a" style="left:161px;top:209.8px;width:204px;height:16.2px;border-radius:2px 2px 0 0;background:linear-gradient(#97afc6,#809bb4 45%,#6b87a1)"></div>
<div class="t" style="left:168.85px;top:214.00px;font-size:8.5px;line-height:8.5px;font-weight:bold;color:#fafafa;font-family:'Liberation Sans',sans-serif;">Resultset 1. Execution Time:130 Milliseconds</div>
<svg class="a" style="left:356.4px;top:212.6px" width="6.4" height="6.4" viewBox="0 0 6.4 6.4"><path d="M0.9 0.9L5.9 5.9M5.9 0.9L0.9 5.9" stroke="#111" stroke-width="1.6"/></svg>
<div class="a" style="left:366.7px;top:209.75px;width:49.5px;height:15px;background:linear-gradient(#e2e9f1,#bccad8)"></div>
<div class="t" style="left:374.60px;top:213.20px;font-size:8.8px;line-height:8.8px;font-weight:normal;color:#54689a;font-family:'Liberation Sans',sans-serif;transform:scaleX(0.8600);">Messages</div>
<div class="a" style="left:161px;top:229.4px;width:34.2px;height:17.1px;border-radius:2px 2px 0 0;background:linear-gradient(#97afc6,#809bb4 45%,#6b87a1)"></div>
<div class="t" style="left:169.40px;top:233.40px;font-size:9px;line-height:9px;font-weight:bold;color:#fafafa;font-family:'Liberation Sans',sans-serif;transform:scaleX(0.9300);">Data</div>
<div class="a" style="left:197.1px;top:230.1px;width:58.6px;height:14.8px;background:linear-gradient(#e2e9f1,#bccad8)"></div>
<div class="t" style="left:204.30px;top:233.60px;font-size:8.8px;line-height:8.8px;font-weight:normal;color:#54689a;font-family:'Liberation Sans',sans-serif;transform:scaleX(0.8980);">Visualization</div>
<div class="a" style="left:161px;top:249.2px;width:586.5px;height:20.4px;background:#383c4b"></div>
<div class="t" style="left:173.50px;top:254.80px;font-size:8.8px;line-height:8.8px;font-weight:normal;color:#f0f0f0;font-family:'Liberation Sans',sans-serif;transform:scaleX(0.9077);-webkit-text-stroke-width:0.3px;">Export</div>
<svg class="a" style="left:203.8px;top:257.5px" width="6.6" height="3.6" viewBox="0 0 6.6 3.6"><path d="M0 0H6.6L3.3 3.6Z" fill="#f5f5f5"/></svg>
<div class="a" style="left:216.25px;top:254.8px;width:8.4px;height:8.3px;background:#f8f8f8"></div>
<div class="t" style="left:228.75px;top:255.80px;font-size:8.8px;line-height:8.8px;font-weight:normal;color:#f0f0f0;font-family:'Liberation Sans',sans-serif;transform:scaleX(0.9137);-webkit-text-stroke-width:0.3px;">Export All Rows</div>
<div class="a" style="left:296.5px;top:252px;width:1px;height:14px;background:#2a2e38"></div>
<div class="t" style="left:305.80px;top:255.80px;font-size:8.8px;line-height:8.8px;font-weight:normal;color:#f0f0f0;font-family:'Liberation Sans',sans-serif;transform:scaleX(0.9182);-webkit-text-stroke-width:0.3px;">Filter:</div>
<div class="a" style="left:327px;top:251.25px;width:109.7px;height:15.25px;background:#2e323c;border:1.3px solid #6f7482"></div>
<div class="a" style="left:440.4px;top:252px;width:1px;height:14px;background:#2a2e38"></div>
<svg class="a" style="left:445.6px;top:253.8px" width="10" height="10" viewBox="0 0 10 10"><path d="M6 6L8.8 8.8" stroke="#d4893a" stroke-width="2" stroke-linecap="round"/><circle cx="3.9" cy="3.9" r="3.4" fill="#d8eafa" stroke="#88b2e0" stroke-width="0.9"/><circle cx="3.3" cy="3.2" r="1.4" fill="#f4faff"/></svg>
<div class="a" style="left:465.4px;top:252px;width:1px;height:14px;background:#2a2e38"></div>
<svg class="a" style="left:472.8px;top:254.4px" width="9.4" height="9.4" viewBox="0 0 9.4 9.4"><path d="M1.2 1.2L8.2 8.2M8.2 1.2L1.2 8.2" stroke="#e83030" stroke-width="2.2"/></svg>
<div class="a" style="left:161px;top:269.5px;width:586px;height:14.8px;background:#3d4152"></div>
<div class="a" style="left:190.3px;top:269.5px;width:1px;height:14.8px;background:#25282f"></div>
<div class="a" style="left:224.1px;top:269.5px;width:1px;height:14.8px;background:#25282f"></div>
<div class="a" style="left:309.0px;top:269.5px;width:1px;height:14.8px;background:#25282f"></div>
<div class="a" style="left:393.2px;top:269.5px;width:1px;height:14.8px;background:#25282f"></div>
<div class="a" style="left:454.3px;top:269.5px;width:1px;height:14.8px;background:#25282f"></div>
<div class="t" style="left:194.90px;top:273.30px;font-size:8.8px;line-height:8.8px;font-weight:normal;color:#f0f0f0;font-family:'Liberation Sans',sans-serif;transform:scaleX(0.9000);-webkit-text-stroke-width:0.3px;">ID</div>
<div class="t" style="left:229.80px;top:273.30px;font-size:8.8px;line-height:8.8px;font-weight:normal;color:#f0f0f0;font-family:'Liberation Sans',sans-serif;transform:scaleX(0.9156);-webkit-text-stroke-width:0.3px;">CUSTOMER_ID</div>
<div class="t" style="left:314.20px;top:273.30px;font-size:8.8px;line-height:8.8px;font-weight:normal;color:#f0f0f0;font-family:'Liberation Sans',sans-serif;transform:scaleX(0.9188);-webkit-text-stroke-width:0.3px;">CUSTOMER_ID</div>
<div class="t" style="left:398.60px;top:273.30px;font-size:8.8px;line-height:8.8px;font-weight:normal;color:#f0f0f0;font-family:'Liberation Sans',sans-serif;transform:scaleX(0.9162);-webkit-text-stroke-width:0.3px;">PLAN_ID</div>
<div class="a" style="left:161px;top:284.3px;width:573px;height:135px;background:#202932"></div>
<div class="a" style="left:161px;top:285.5px;width:12px;height:13.96px;background:#1c222a"></div>
<div class="a" style="left:173px;top:285.5px;width:17.3px;height:13.96px;background:linear-gradient(90deg,#343c4b,#3c4454)"></div>
<div class="a" style="left:161px;top:285px;width:294px;height:1px;background:#9a9da4"></div>
<div class="a" style="left:190px;top:285px;width:1px;height:14px;background:#9a9da4"></div>
<div class="a" style="left:224px;top:285px;width:1px;height:14px;background:#9a9da4"></div>
<div class="a" style="left:309px;top:285px;width:1px;height:14px;background:#9a9da4"></div>
<div class="a" style="left:393px;top:285px;width:1px;height:14px;background:#9a9da4"></div>
<div class="a" style="left:454px;top:285px;width:1px;height:14px;background:#9a9da4"></div>
<div class="t" style="left:181.71px;top:289.30px;font-size:9px;line-height:9px;font-weight:normal;color:#f4f6fa;font-family:'Liberation Sans',sans-serif;-webkit-text-stroke-width:0.3px;">1</div>
<div class="t" style="left:195.80px;top:286.10px;font-size:8.8px;line-height:8.8px;font-weight:normal;color:#f0f0f0;font-family:'Liberation Sans',sans-serif;-webkit-text-stroke-width:0.3px;">7</div>
<div class="t" style="left:229.29px;top:286.10px;font-size:8.8px;line-height:8.8px;font-weight:normal;color:#f0f0f0;font-family:'Liberation Sans',sans-serif;transform:scaleX(0.9143);-webkit-text-stroke-width:0.3px;">105131</div>
<div class="t" style="left:313.69px;top:286.10px;font-size:8.8px;line-height:8.8px;font-weight:normal;color:#f0f0f0;font-family:'Liberation Sans',sans-serif;transform:scaleX(0.9143);-webkit-text-stroke-width:0.3px;">105131</div>
<div class="t" style="left:398.80px;top:286.10px;font-size:8.8px;line-height:8.8px;font-weight:normal;color:#f0f0f0;font-family:'Liberation Sans',sans-serif;-webkit-text-stroke-width:0.3px;">271</div>
<div class="a" style="left:161px;top:300.26px;width:12px;height:13.96px;background:#1c222a"></div>
<div class="a" style="left:173px;top:300.26px;width:17.3px;height:13.96px;background:linear-gradient(90deg,#343c4b,#3c4454)"></div>
<div class="a" style="left:161px;top:299px;width:294px;height:1px;background:#9a9da4"></div>
<div class="a" style="left:190px;top:299px;width:1px;height:15px;background:#9a9da4"></div>
<div class="a" style="left:224px;top:299px;width:1px;height:15px;background:#9a9da4"></div>
<div class="a" style="left:309px;top:299px;width:1px;height:15px;background:#9a9da4"></div>
<div class="a" style="left:393px;top:299px;width:1px;height:15px;background:#9a9da4"></div>
<div class="a" style="left:454px;top:299px;width:1px;height:15px;background:#9a9da4"></div>
<div class="t" style="left:182.56px;top:304.06px;font-size:9px;line-height:9px;font-weight:normal;color:#f4f6fa;font-family:'Liberation Sans',sans-serif;-webkit-text-stroke-width:0.3px;">2</div>
<div class="t" style="left:195.80px;top:300.86px;font-size:8.8px;line-height:8.8px;font-weight:normal;color:#f0f0f0;font-family:'Liberation Sans',sans-serif;-webkit-text-stroke-width:0.3px;">8</div>
<div class="t" style="left:229.29px;top:300.86px;font-size:8.8px;line-height:8.8px;font-weight:normal;color:#f0f0f0;font-family:'Liberation Sans',sans-serif;transform:scaleX(0.9143);-webkit-text-stroke-width:0.3px;">105131</div>
<div class="t" style="left:313.69px;top:300.86px;font-size:8.8px;line-height:8.8px;font-weight:normal;color:#f0f0f0;font-family:'Liberation Sans',sans-serif;transform:scaleX(0.9143);-webkit-text-stroke-width:0.3px;">105131</div>
<div class="t" style="left:398.80px;top:300.86px;font-size:8.8px;line-height:8.8px;font-weight:normal;color:#f0f0f0;font-family:'Liberation Sans',sans-serif;-webkit-text-stroke-width:0.3px;">272</div>
<div class="a" style="left:161px;top:315.02px;width:12px;height:13.96px;background:#1c222a"></div>
<div class="a" style="left:173px;top:315.02px;width:17.3px;height:13.96px;background:linear-gradient(90deg,#343c4b,#3c4454)"></div>
<div class="a" style="left:161px;top:314px;width:294px;height:1px;background:#9a9da4"></div>
<div class="a" style="left:190px;top:314px;width:1px;height:15px;background:#9a9da4"></div>
<div class="a" style="left:224px;top:314px;width:1px;height:15px;background:#9a9da4"></div>
<div class="a" style="left:309px;top:314px;width:1px;height:15px;background:#9a9da4"></div>
<div class="a" style="left:393px;top:314px;width:1px;height:15px;background:#9a9da4"></div>
<div class="a" style="left:454px;top:314px;width:1px;height:15px;background:#9a9da4"></div>
<div class="t" style="left:182.43px;top:318.82px;font-size:9px;line-height:9px;font-weight:normal;color:#f4f6fa;font-family:'Liberation Sans',sans-serif;-webkit-text-stroke-width:0.3px;">3</div>
<div class="t" style="left:195.80px;top:315.62px;font-size:8.8px;line-height:8.8px;font-weight:normal;color:#f0f0f0;font-family:'Liberation Sans',sans-serif;-webkit-text-stroke-width:0.3px;">9</div>
<div class="t" style="left:229.29px;top:315.62px;font-size:8.8px;line-height:8.8px;font-weight:normal;color:#f0f0f0;font-family:'Liberation Sans',sans-serif;transform:scaleX(0.9143);-webkit-text-stroke-width:0.3px;">105131</div>
<div class="t" style="left:313.69px;top:315.62px;font-size:8.8px;line-height:8.8px;font-weight:normal;color:#f0f0f0;font-family:'Liberation Sans',sans-serif;transform:scaleX(0.9143);-webkit-text-stroke-width:0.3px;">105131</div>
<div class="t" style="left:398.80px;top:315.62px;font-size:8.8px;line-height:8.8px;font-weight:normal;color:#f0f0f0;font-family:'Liberation Sans',sans-serif;-webkit-text-stroke-width:0.3px;">272</div>
<div class="a" style="left:161px;top:329.78000000000003px;width:12px;height:13.96px;background:#1c222a"></div>
<div class="a" style="left:173px;top:329.78000000000003px;width:17.3px;height:13.96px;background:linear-gradient(90deg,#343c4b,#3c4454)"></div>
<div class="a" style="left:161px;top:329px;width:294px;height:1px;background:#9a9da4"></div>
<div class="a" style="left:190px;top:329px;width:1px;height:15px;background:#9a9da4"></div>
<div class="a" style="left:224px;top:329px;width:1px;height:15px;background:#9a9da4"></div>
<div class="a" style="left:309px;top:329px;width:1px;height:15px;background:#9a9da4"></div>
<div class="a" style="left:393px;top:329px;width:1px;height:15px;background:#9a9da4"></div>
<div class="a" style="left:454px;top:329px;width:1px;height:15px;background:#9a9da4"></div>
<div class="t" style="left:182.09px;top:333.58px;font-size:9px;line-height:9px;font-weight:normal;color:#f4f6fa;font-family:'Liberation Sans',sans-serif;-webkit-text-stroke-width:0.3px;">4</div>
<div class="t" style="left:194.80px;top:330.38px;font-size:8.8px;line-height:8.8px;font-weight:normal;color:#f0f0f0;font-family:'Liberation Sans',sans-serif;-webkit-text-stroke-width:0.3px;">10</div>
<div class="t" style="left:229.29px;top:330.38px;font-size:8.8px;line-height:8.8px;font-weight:normal;color:#f0f0f0;font-family:'Liberation Sans',sans-serif;transform:scaleX(0.9143);-webkit-text-stroke-width:0.3px;">105131</div>
<div class="t" style="left:313.69px;top:330.38px;font-size:8.8px;line-height:8.8px;font-weight:normal;color:#f0f0f0;font-family:'Liberation Sans',sans-serif;transform:scaleX(0.9143);-webkit-text-stroke-width:0.3px;">105131</div>
<div class="t" style="left:398.80px;top:330.38px;font-size:8.8px;line-height:8.8px;font-weight:normal;color:#f0f0f0;font-family:'Liberation Sans',sans-serif;-webkit-text-stroke-width:0.3px;">272</div>
<div class="a" style="left:161px;top:344.54px;width:12px;height:13.96px;background:#1c222a"></div>
<div class="a" style="left:173px;top:344.54px;width:17.3px;height:13.96px;background:linear-gradient(90deg,#343c4b,#3c4454)"></div>
<div class="a" style="left:161px;top:344px;width:294px;height:1px;background:#9a9da4"></div>
<div class="a" style="left:190px;top:344px;width:1px;height:14px;background:#9a9da4"></div>
<div class="a" style="left:224px;top:344px;width:1px;height:14px;background:#9a9da4"></div>
<div class="a" style="left:309px;top:344px;width:1px;height:14px;background:#9a9da4"></div>
<div class="a" style="left:393px;top:344px;width:1px;height:14px;background:#9a9da4"></div>
<div class="a" style="left:454px;top:344px;width:1px;height:14px;background:#9a9da4"></div>
<div class="t" style="left:182.42px;top:348.34px;font-size:9px;line-height:9px;font-weight:normal;color:#f4f6fa;font-family:'Liberation Sans',sans-serif;-webkit-text-stroke-width:0.3px;">5</div>
<div class="t" style="left:194.80px;top:345.14px;font-size:8.8px;line-height:8.8px;font-weight:normal;color:#f0f0f0;font-family:'Liberation Sans',sans-serif;-webkit-text-stroke-width:0.3px;">11</div>
<div class="t" style="left:229.29px;top:345.14px;font-size:8.8px;line-height:8.8px;font-weight:normal;color:#f0f0f0;font-family:'Liberation Sans',sans-serif;transform:scaleX(0.9143);-webkit-text-stroke-width:0.3px;">105131</div>
<div class="t" style="left:313.69px;top:345.14px;font-size:8.8px;line-height:8.8px;font-weight:normal;color:#f0f0f0;font-family:'Liberation Sans',sans-serif;transform:scaleX(0.9143);-webkit-text-stroke-width:0.3px;">105131</div>
<div class="t" style="left:398.80px;top:345.14px;font-size:8.8px;line-height:8.8px;font-weight:normal;color:#f0f0f0;font-family:'Liberation Sans',sans-serif;-webkit-text-stroke-width:0.3px;">272</div>
<div class="a" style="left:161px;top:359.3px;width:12px;height:13.96px;background:#1c222a"></div>
<div class="a" style="left:173px;top:359.3px;width:17.3px;height:13.96px;background:linear-gradient(90deg,#343c4b,#3c4454)"></div>
<div class="a" style="left:161px;top:358px;width:294px;height:1px;background:#9a9da4"></div>
<div class="a" style="left:190px;top:358px;width:1px;height:15px;background:#9a9da4"></div>
<div class="a" style="left:224px;top:358px;width:1px;height:15px;background:#9a9da4"></div>
<div class="a" style="left:309px;top:358px;width:1px;height:15px;background:#9a9da4"></div>
<div class="a" style="left:393px;top:358px;width:1px;height:15px;background:#9a9da4"></div>
<div class="a" style="left:454px;top:358px;width:1px;height:15px;background:#9a9da4"></div>
<div class="t" style="left:182.55px;top:363.10px;font-size:9px;line-height:9px;font-weight:normal;color:#f4f6fa;font-family:'Liberation Sans',sans-serif;-webkit-text-stroke-width:0.3px;">6</div>
<div class="t" style="left:194.80px;top:359.90px;font-size:8.8px;line-height:8.8px;font-weight:normal;color:#f0f0f0;font-family:'Liberation Sans',sans-serif;-webkit-text-stroke-width:0.3px;">12</div>
<div class="t" style="left:229.29px;top:359.90px;font-size:8.8px;line-height:8.8px;font-weight:normal;color:#f0f0f0;font-family:'Liberation Sans',sans-serif;transform:scaleX(0.9143);-webkit-text-stroke-width:0.3px;">105131</div>
<div class="t" style="left:313.69px;top:359.90px;font-size:8.8px;line-height:8.8px;font-weight:normal;color:#f0f0f0;font-family:'Liberation Sans',sans-serif;transform:scaleX(0.9143);-webkit-text-stroke-width:0.3px;">105131</div>
<div class="t" style="left:398.80px;top:359.90px;font-size:8.8px;line-height:8.8px;font-weight:normal;color:#f0f0f0;font-family:'Liberation Sans',sans-serif;-webkit-text-stroke-width:0.3px;">272</div>
<div class="a" style="left:161px;top:374.06px;width:12px;height:13.96px;background:#1c222a"></div>
<div class="a" style="left:173px;top:374.06px;width:17.3px;height:13.96px;background:linear-gradient(90deg,#343c4b,#3c4454)"></div>
<div class="a" style="left:161px;top:373px;width:294px;height:1px;background:#9a9da4"></div>
<div class="a" style="left:190px;top:373px;width:1px;height:15px;background:#9a9da4"></div>
<div class="a" style="left:224px;top:373px;width:1px;height:15px;background:#9a9da4"></div>
<div class="a" style="left:309px;top:373px;width:1px;height:15px;background:#9a9da4"></div>
<div class="a" style="left:393px;top:373px;width:1px;height:15px;background:#9a9da4"></div>
<div class="a" style="left:454px;top:373px;width:1px;height:15px;background:#9a9da4"></div>
<div class="t" style="left:182.67px;top:377.86px;font-size:9px;line-height:9px;font-weight:normal;color:#f4f6fa;font-family:'Liberation Sans',sans-serif;-webkit-text-stroke-width:0.3px;">7</div>
<div class="t" style="left:194.80px;top:374.66px;font-size:8.8px;line-height:8.8px;font-weight:normal;color:#f0f0f0;font-family:'Liberation Sans',sans-serif;-webkit-text-stroke-width:0.3px;">13</div>
<div class="t" style="left:229.29px;top:374.66px;font-size:8.8px;line-height:8.8px;font-weight:normal;color:#f0f0f0;font-family:'Liberation Sans',sans-serif;transform:scaleX(0.9143);-webkit-text-stroke-width:0.3px;">105131</div>
<div class="t" style="left:313.69px;top:374.66px;font-size:8.8px;line-height:8.8px;font-weight:normal;color:#f0f0f0;font-family:'Liberation Sans',sans-serif;transform:scaleX(0.9143);-webkit-text-stroke-width:0.3px;">105131</div>
<div class="t" style="left:398.80px;top:374.66px;font-size:8.8px;line-height:8.8px;font-weight:normal;color:#f0f0f0;font-family:'Liberation Sans',sans-serif;-webkit-text-stroke-width:0.3px;">272</div>
<div class="a" style="left:161px;top:388.82px;width:12px;height:13.96px;background:#1c222a"></div>
<div class="a" style="left:173px;top:388.82px;width:17.3px;height:13.96px;background:linear-gradient(90deg,#343c4b,#3c4454)"></div>
<div class="a" style="left:161px;top:388px;width:294px;height:1px;background:#9a9da4"></div>
<div class="a" style="left:190px;top:388px;width:1px;height:15px;background:#9a9da4"></div>
<div class="a" style="left:224px;top:388px;width:1px;height:15px;background:#9a9da4"></div>
<div class="a" style="left:309px;top:388px;width:1px;height:15px;background:#9a9da4"></div>
<div class="a" style="left:393px;top:388px;width:1px;height:15px;background:#9a9da4"></div>
<div class="a" style="left:454px;top:388px;width:1px;height:15px;background:#9a9da4"></div>
<div class="t" style="left:182.46px;top:392.62px;font-size:9px;line-height:9px;font-weight:normal;color:#f4f6fa;font-family:'Liberation Sans',sans-serif;-webkit-text-stroke-width:0.3px;">8</div>
<div class="t" style="left:194.80px;top:389.42px;font-size:8.8px;line-height:8.8px;font-weight:normal;color:#f0f0f0;font-family:'Liberation Sans',sans-serif;-webkit-text-stroke-width:0.3px;">14</div>
<div class="t" style="left:229.29px;top:389.42px;font-size:8.8px;line-height:8.8px;font-weight:normal;color:#f0f0f0;font-family:'Liberation Sans',sans-serif;transform:scaleX(0.9143);-webkit-text-stroke-width:0.3px;">105131</div>
<div class="t" style="left:313.69px;top:389.42px;font-size:8.8px;line-height:8.8px;font-weight:normal;color:#f0f0f0;font-family:'Liberation Sans',sans-serif;transform:scaleX(0.9143);-webkit-text-stroke-width:0.3px;">105131</div>
<div class="t" style="left:398.80px;top:389.42px;font-size:8.8px;line-height:8.8px;font-weight:normal;color:#f0f0f0;font-family:'Liberation Sans',sans-serif;-webkit-text-stroke-width:0.3px;">272</div>
<div class="a" style="left:161px;top:403.58px;width:12px;height:13.96px;background:#1c222a"></div>
<div class="a" style="left:173px;top:403.58px;width:17.3px;height:13.96px;background:linear-gradient(90deg,#343c4b,#3c4454)"></div>
<div class="a" style="left:161px;top:403px;width:294px;height:1px;background:#9a9da4"></div>
<div class="a" style="left:190px;top:403px;width:1px;height:15px;background:#9a9da4"></div>
<div class="a" style="left:224px;top:403px;width:1px;height:15px;background:#9a9da4"></div>
<div class="a" style="left:309px;top:403px;width:1px;height:15px;background:#9a9da4"></div>
<div class="a" style="left:393px;top:403px;width:1px;height:15px;background:#9a9da4"></div>
<div class="a" style="left:454px;top:403px;width:1px;height:15px;background:#9a9da4"></div>
<div class="t" style="left:182.54px;top:407.38px;font-size:9px;line-height:9px;font-weight:normal;color:#f4f6fa;font-family:'Liberation Sans',sans-serif;-webkit-text-stroke-width:0.3px;">9</div>
<div class="t" style="left:194.80px;top:404.18px;font-size:8.8px;line-height:8.8px;font-weight:normal;color:#f0f0f0;font-family:'Liberation Sans',sans-serif;-webkit-text-stroke-width:0.3px;">15</div>
<div class="t" style="left:229.29px;top:404.18px;font-size:8.8px;line-height:8.8px;font-weight:normal;color:#f0f0f0;font-family:'Liberation Sans',sans-serif;transform:scaleX(0.9143);-webkit-text-stroke-width:0.3px;">105131</div>
<div class="t" style="left:313.69px;top:404.18px;font-size:8.8px;line-height:8.8px;font-weight:normal;color:#f0f0f0;font-family:'Liberation Sans',sans-serif;transform:scaleX(0.9143);-webkit-text-stroke-width:0.3px;">105131</div>
<div class="t" style="left:398.80px;top:404.18px;font-size:8.8px;line-height:8.8px;font-weight:normal;color:#f0f0f0;font-family:'Liberation Sans',sans-serif;-webkit-text-stroke-width:0.3px;">272</div>
<div class="a" style="left:161px;top:418.34px;width:12px;height:13.96px;background:#1c222a"></div>
<div class="a" style="left:173px;top:418.34px;width:17.3px;height:13.96px;background:linear-gradient(90deg,#343c4b,#3c4454)"></div>
<div class="a" style="left:161px;top:418px;width:294px;height:1px;background:#9a9da4"></div>
<div class="a" style="left:190px;top:418px;width:1px;height:14px;background:#9a9da4"></div>
<div class="a" style="left:224px;top:418px;width:1px;height:14px;background:#9a9da4"></div>
<div class="a" style="left:309px;top:418px;width:1px;height:14px;background:#9a9da4"></div>
<div class="a" style="left:393px;top:418px;width:1px;height:14px;background:#9a9da4"></div>
<div class="a" style="left:454px;top:418px;width:1px;height:14px;background:#9a9da4"></div>
<div class="t" style="left:176.93px;top:422.14px;font-size:9px;line-height:9px;font-weight:normal;color:#f4f6fa;font-family:'Liberation Sans',sans-serif;-webkit-text-stroke-width:0.3px;">10</div>
<div class="t" style="left:194.80px;top:418.94px;font-size:8.8px;line-height:8.8px;font-weight:normal;color:#f0f0f0;font-family:'Liberation Sans',sans-serif;-webkit-text-stroke-width:0.3px;">16</div>
<div class="t" style="left:229.29px;top:418.94px;font-size:8.8px;line-height:8.8px;font-weight:normal;color:#f0f0f0;font-family:'Liberation Sans',sans-serif;transform:scaleX(0.9143);-webkit-text-stroke-width:0.3px;">105131</div>
<div class="t" style="left:313.69px;top:418.94px;font-size:8.8px;line-height:8.8px;font-weight:normal;color:#f0f0f0;font-family:'Liberation Sans',sans-serif;transform:scaleX(0.9143);-webkit-text-stroke-width:0.3px;">105131</div>
<div class="t" style="left:398.80px;top:418.94px;font-size:8.8px;line-height:8.8px;font-weight:normal;color:#f0f0f0;font-family:'Liberation Sans',sans-serif;-webkit-text-stroke-width:0.3px;">272</div>
<div class="a" style="left:734px;top:284.3px;width:13px;height:135px;background:#efefef"></div>
<svg class="a" style="left:737px;top:289.5px" width="7" height="4" viewBox="0 0 7 4"><path d="M0 4H7L3.5 0.5Z" fill="#8a8a8a"/></svg>
<div class="a" style="left:736.3px;top:297.1px;width:8.8px;height:19.7px;background:#c3c3c3"></div>
<svg class="a" style="left:737px;top:410.8px" width="7" height="4" viewBox="0 0 7 4"><path d="M0 0H7L3.5 3.5Z" fill="#555"/></svg>
<div class="a" style="left:154.7px;top:441.2px;width:594.5px;height:15px;background:#232a33"></div>
<div class="a" style="left:161px;top:419.4px;width:586.3px;height:21.4px;background:linear-gradient(#3e4253,#363a49)"></div>
<svg class="a" style="left:168px;top:425.2px" width="8" height="9" viewBox="0 0 8 9"><rect x="0" y="0" width="1.6" height="9" fill="#777c88"/><path d="M7.6 0.3V8.7L2.4 4.5Z" fill="#777c88"/></svg>
<svg class="a" style="left:190.8px;top:425.2px" width="5" height="9" viewBox="0 0 5 9"><path d="M5 0.3V8.7L0 4.5Z" fill="#777c88"/></svg>
<div class="a" style="left:209.8px;top:423px;width:1px;height:14px;background:#2a2e38"></div>
<div class="t" style="left:211.00px;top:425.90px;font-size:8.8px;line-height:8.8px;font-weight:normal;color:#f0f0f0;font-family:'Liberation Sans',sans-serif;transform:scaleX(0.9350);-webkit-text-stroke-width:0.3px;">Page</div>
<div class="a" style="left:231px;top:425.2px;width:23.6px;height:10.2px;background:#ffffff"></div>
<div class="t" style="left:232.60px;top:426.00px;font-size:9px;line-height:9px;font-weight:bold;color:#111;font-family:'Liberation Sans',sans-serif;transform:scaleX(0.5600);">1</div>
<div class="t" style="left:255.00px;top:426.90px;font-size:8.8px;line-height:8.8px;font-weight:normal;color:#f0f0f0;font-family:'Liberation Sans',sans-serif;transform:scaleX(0.9000);-webkit-text-stroke-width:0.3px;">of 20</div>
<div class="a" style="left:277.5px;top:423px;width:1px;height:14px;background:#2a2e38"></div>
<svg class="a" style="left:285.5px;top:425.2px" width="6" height="9" viewBox="0 0 6 9"><path d="M0.3 0.3V8.7L5.5 4.5Z" fill="#f5f5f5"/></svg>
<svg class="a" style="left:305.4px;top:425.2px" width="8" height="9" viewBox="0 0 8 9"><path d="M0.3 0.3V8.7L5.5 4.5Z" fill="#f5f5f5"/><rect x="6" y="0" width="1.8" height="9" fill="#f5f5f5"/></svg>
<div class="a" style="left:325px;top:423px;width:1px;height:14px;background:#2a2e38"></div>
<div class="t" style="left:652.00px;top:426.60px;font-size:8.8px;line-height:8.8px;font-weight:normal;color:#f4f4f4;font-family:'Liberation Sans',sans-serif;transform:scaleX(0.9103);-webkit-text-stroke-width:0.3px;">Displaying 1 - 50 of 1000</div>
<div class="a" style="left:744.5px;top:423px;width:1px;height:14px;background:#2a2e38"></div>
<div class="a" style="left:489.4px;top:134.5px;width:118px;height:149.5px;background:#000;border:1px solid #8a8a8a;border-right:none;border-radius:0 2px 2px 0"></div>
<div class="a" style="left:594.2px;top:134.7px;width:13px;height:149px;background:#efefef;border-radius:0 2px 2px 0"></div>
<svg class="a" style="left:598px;top:140.6px" width="5.4" height="3" viewBox="0 0 5.4 3"><path d="M0 3H5.4L2.7 0Z" fill="#777"/></svg>
<div class="a" style="left:596.1px;top:148px;width:9px;height:20px;background:#c3c3c3"></div>
<svg class="a" style="left:598px;top:276.5px" width="5.4" height="3" viewBox="0 0 5.4 3"><path d="M0 0H5.4L2.7 3Z" fill="#333"/></svg>
<div class="a" style="left:491.3px;top:136.4px;width:101.9px;height:8.5px;background:#0a84ff;border-radius:2px"></div>
<div class="a" style="left:490px;top:135px;width:103.5px;height:148px;overflow:hidden">
<div class="t" style="left:4.00px;top:2.50px;font:7.6px/8px 'Liberation Mono',monospace;color:#ffffff;font-kerning:none;transform:scaleX(0.89)">HR.A1HACK_MASKS2</div>
<div class="t" style="left:4.00px;top:10.60px;font:7.6px/8px 'Liberation Mono',monospace;color:#f4f2e8;font-kerning:none;transform:scaleX(0.89)">HR.A2HACK_MASKS2</div>
<div class="t" style="left:4.00px;top:18.70px;font:7.6px/8px 'Liberation Mono',monospace;color:#f4f2e8;font-kerning:none;transform:scaleX(0.89)">HR.ACCOUNTS</div>
<div class="t" style="left:4.00px;top:26.80px;font:7.6px/8px 'Liberation Mono',monospace;color:#f4f2e8;font-kerning:none;transform:scaleX(0.89)">HR.ADDRESS</div>
<div class="t" style="left:4.00px;top:34.90px;font:7.6px/8px 'Liberation Mono',monospace;color:#f4f2e8;font-kerning:none;transform:scaleX(0.89)">HR.ADDRESS2</div>
<div class="t" style="left:4.00px;top:43.00px;font:7.6px/8px 'Liberation Mono',monospace;color:#f4f2e8;font-kerning:none;transform:scaleX(0.89)">HR.ADDRESS3</div>
<div class="t" style="left:4.00px;top:51.10px;font:7.6px/8px 'Liberation Mono',monospace;color:#f4f2e8;font-kerning:none;transform:scaleX(0.89)">HR.ADPW_AM_USERAPP_PARA</div>
<div class="t" style="left:4.00px;top:59.20px;font:7.6px/8px 'Liberation Mono',monospace;color:#f4f2e8;font-kerning:none;transform:scaleX(0.89)">HR.ALL_CHARTS</div>
<div class="t" style="left:4.00px;top:67.30px;font:7.6px/8px 'Liberation Mono',monospace;color:#f4f2e8;font-kerning:none;transform:scaleX(0.89)">HR.ARTICLE_COLOR_LOOKUP</div>
<div class="t" style="left:4.00px;top:75.40px;font:7.6px/8px 'Liberation Mono',monospace;color:#f4f2e8;font-kerning:none;transform:scaleX(0.89)">HR.ATEST11</div>
<div class="t" style="left:4.00px;top:83.50px;font:7.6px/8px 'Liberation Mono',monospace;color:#f4f2e8;font-kerning:none;transform:scaleX(0.89)">HR.BIG_TABLE</div>
<div class="t" style="left:4.00px;top:91.60px;font:7.6px/8px 'Liberation Mono',monospace;color:#f4f2e8;font-kerning:none;transform:scaleX(0.89)">HR.BLOB_DATA</div>
<div class="t" style="left:4.00px;top:99.70px;font:7.6px/8px 'Liberation Mono',monospace;color:#f4f2e8;font-kerning:none;transform:scaleX(0.89)">HR.BUBBLE_CHART_TUTORIAL</div>
<div class="t" style="left:4.00px;top:107.80px;font:7.6px/8px 'Liberation Mono',monospace;color:#f4f2e8;font-kerning:none;transform:scaleX(0.89)">HR.CARS</div>
<div class="t" style="left:4.00px;top:115.90px;font:7.6px/8px 'Liberation Mono',monospace;color:#f4f2e8;font-kerning:none;transform:scaleX(0.89)">HR.CLASSIFICATION_DATA</div>
<div class="t" style="left:4.00px;top:124.00px;font:7.6px/8px 'Liberation Mono',monospace;color:#f4f2e8;font-kerning:none;transform:scaleX(0.89)">HR.CLI_NDF</div>
<div class="t" style="left:4.00px;top:132.10px;font:7.6px/8px 'Liberation Mono',monospace;color:#f4f2e8;font-kerning:none;transform:scaleX(0.89)">HR.CONTRACT_MANY_COLUMNS</div>
<div class="t" style="left:4.00px;top:140.20px;font:7.6px/8px 'Liberation Mono',monospace;color:#f4f2e8;font-kerning:none;transform:scaleX(0.89)">HR.COST_OUTPUT_DEFECT_CHART</div>
</div>
<svg class="a" style="left:519.8px;top:152.6px" width="12" height="17" viewBox="0 0 12 17"><path d="M3.5 1.2C3.5 0 5.5 0 5.5 1.2V6C5.7 5.2 7.5 5.2 7.5 6.2C7.7 5.4 9.5 5.4 9.5 6.6C9.7 6 11.6 6 11.6 7.2V11C11.6 13.5 10.6 15 10 16.2H4.8C4 15 2.6 13.6 1.2 12C0.2 10.8 0.4 9.6 1.6 9.8C2.3 9.9 3 10.5 3.5 11Z" fill="#fff" stroke="#111" stroke-width="0.6"/><path d="M5.5 7V10.5M7.5 7V10.5M9.5 7.2V10.5" stroke="#888" stroke-width="0.5"/></svg>
</body></html>
